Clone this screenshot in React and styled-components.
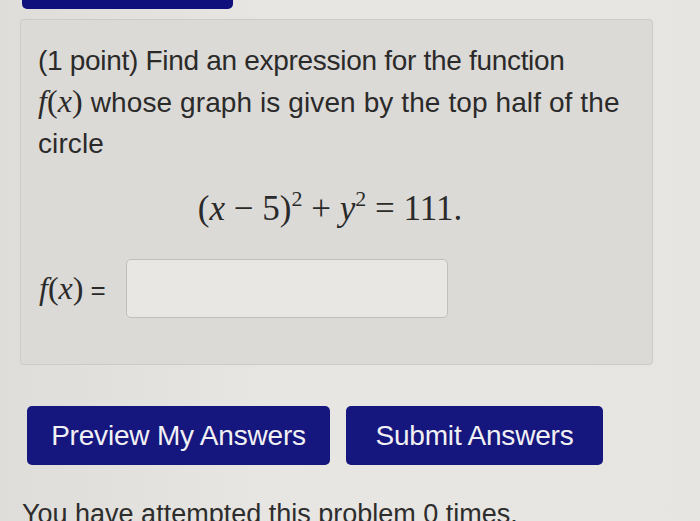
import React from "react";
import styled, { createGlobalStyle } from "styled-components";

const GlobalStyle = createGlobalStyle`
    html, body {
        margin: 0;
        padding: 0;
        background: #e6e4e0;
    }
`;

const Page = styled.div`
    width: 700px;
    height: 521px;
    overflow: hidden;
    background: linear-gradient(90deg, #dfddd9 0%, #e8e6e2 40%, #e7e5e1 100%);
    font-family: "Liberation Sans", Arial, sans-serif;
    color: #2b2a2a;
`;

const TopBar = styled.div`
    margin-left: 22px;
    width: 211px;
    height: 9px;
    background: #10107c;
    border-radius: 0 0 5px 5px;
`;

const Panel = styled.div`
    margin: 10px 0 0 20px;
    width: 633px;
    box-sizing: border-box;
    padding: 20px 18px 46px 17px;
    background: #dcdad7;
    border: 1px solid #cdcbc8;
    border-radius: 4px;
`;

const Prompt = styled.p`
    margin: 0;
    font-size: 28px;
    line-height: 41px;
    letter-spacing: 0.1px;
`;

// the first line sits a little narrower in the reference
const Line = styled.span`
    letter-spacing: ${(props) => props.spacing || "0"};
`;

const MathVar = styled.span`
    font-family: "Liberation Serif", "Times New Roman", serif;
    font-style: ${(props) => (props.italic ? "italic" : "normal")};
    font-size: 32px;
`;

const Equation = styled.div`
    margin-top: 26px;
    height: 38px;
    line-height: 38px;
    text-align: center;
    padding-right: 12px;
    font-family: "Liberation Serif", "Times New Roman", serif;
    font-size: 35px;
    color: #2a2a2a;

    sup {
        font-size: 22px;
        line-height: 0;
        vertical-align: 14px;
    }
`;

const AnswerRow = styled.div`
    margin-top: 31px;
    display: flex;
    align-items: center;
    gap: 20px;
`;

const Label = styled.span`
    font-family: "Liberation Serif", "Times New Roman", serif;
    font-size: 32px;
    padding-left: 1px;
    white-space: nowrap;
`;

const Eq = styled.span`
    font-family: "Liberation Sans", Arial, sans-serif;
    font-size: 26px;
    margin-left: 7px;
`;

const AnswerInput = styled.input`
    width: 322px;
    height: 59px;
    box-sizing: border-box;
    background: #e9e7e4;
    border: 1.5px solid #c1bfbc;
    border-radius: 5px;
    outline: none;
`;

const ButtonRow = styled.div`
    margin: 41px 0 0 27px;
    display: flex;
    gap: 16px;
`;

const Button = styled.button`
    height: 59px;
    width: ${(props) => props.width}px;
    box-sizing: border-box;
    padding: 0;
    background: #16167f;
    color: #f1f1f4;
    border: none;
    border-radius: 5px;
    font-family: "Liberation Sans", Arial, sans-serif;
    font-size: 28px;
    letter-spacing: -0.2px;
    cursor: pointer;
`;

const Attempts = styled.div`
    margin: 34px 0 0 22px;
    font-size: 27px;
    line-height: 30px;
    color: #2e2d2d;
    white-space: nowrap;
`;

const App = () => {
    return (
        <Page>
            <GlobalStyle />
            <TopBar />
            <Panel>
                <Prompt>
                    <Line spacing="-0.3px">(1 point) Find an expression for the function</Line>
                    <br />
                    <MathVar italic>f</MathVar>
                    <MathVar>(</MathVar>
                    <MathVar italic>x</MathVar>
                    <MathVar>)</MathVar> whose graph is given by the top half of the
                    <br />
                    circle
                </Prompt>
                <Equation>
                    (<i>x</i> &minus; 5)<sup>2</sup> + <i>y</i>
                    <sup>2</sup> = 111.
                </Equation>
                <AnswerRow>
                    <Label>
                        <i>f</i>(<i>x</i>)<Eq>=</Eq>
                    </Label>
                    <AnswerInput type="text" aria-label="f(x)" />
                </AnswerRow>
            </Panel>
            <ButtonRow>
                <Button width={303}>Preview My Answers</Button>
                <Button width={257}>Submit Answers</Button>
            </ButtonRow>
            <Attempts>You have attempted this problem 0 times.</Attempts>
        </Page>
    );
};

export default App;
